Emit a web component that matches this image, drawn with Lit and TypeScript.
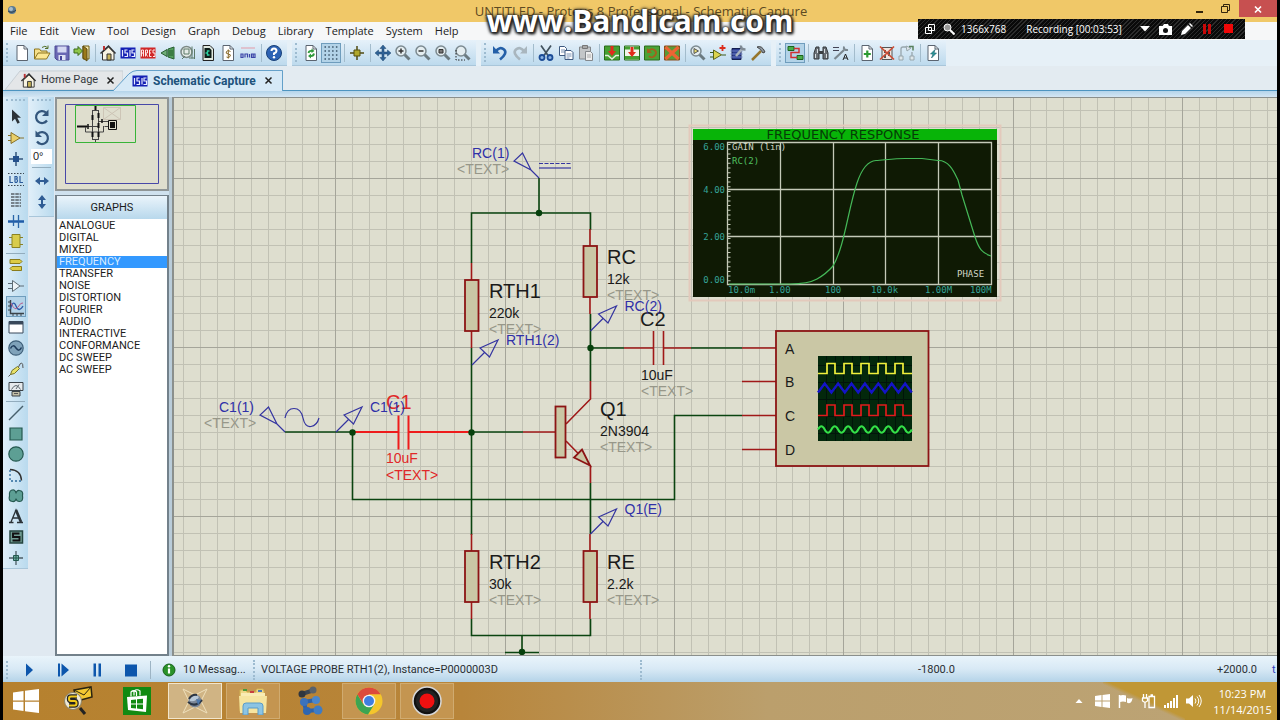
import { LitElement, html, svg, css } from "lit";
import { customElement, state } from "lit/decorators.js";
import { classMap } from "lit/directives/class-map.js";

/* ---------- icon library: every glyph is drawn in an 18 x 18 box ---------- */
const page = svg`<path d="M4 1.500h7l3.500 3.500v11.500H4z" fill="#fff" stroke="#5b6470"/><path d="M11 1.500V5h3.500" fill="none" stroke="#5b6470"/>`;
const lens = svg`<path d="M10.500 10.500l5 5" stroke="#6b7a80" stroke-width="3"/><circle cx="7" cy="7" r="5" fill="#e4edf0" stroke="#7c8a90" stroke-width="1.500"/>`;
const glyphs: Record<string, unknown> = {
  new: page,
  open: svg`<path d="M1.500 15V5h5l1.500 2h6v2" fill="#f6e08a" stroke="#8c7420"/><path d="M1.500 15L5 9h12l-3.500 6z" fill="#fbe793" stroke="#8c7420"/><path d="M9 3.500q3-2.500 5.500 0M15 1.500v3h-3" fill="none" stroke="#55702a"/>`,
  save: svg`<path d="M2 2h14v14H4l-2-2z" fill="#6a68b4" stroke="#4c4a94"/><path d="M4.500 2.500h9v6h-9z" fill="#d4d8f2"/><path d="M5.500 11h7v5h-7z" fill="#dfe2f4"/><path d="M7 12h2v4H7z" fill="#44449a"/>`,
  exit: svg`<path d="M10 2h6v13h-6z" fill="#f4e9b0" stroke="#6c5a10"/><path d="M10 2l4 3v12l-4-3z" fill="#9a7a1c" stroke="#5c4a10"/><path d="M1 5h4V2.500L9.500 7 5 11.500V9H1z" fill="#8ec64a" stroke="#3b6a1a"/>`,
  home: svg`<path d="M3.500 8.500L9.500 3l5.500 5.500V16h-11.500z" fill="#f7f3e2" stroke="#333"/><path d="M1.500 9.500L9.500 2l7 7.500" fill="none" stroke="#333" stroke-width="1.500"/><path d="M4 2h2v4H4z" fill="#b33"/><path d="M8 10h4v6H8z" fill="#c9b458" stroke="#333"/>`,
  isis: svg`<path d="M1.500 3.500h15v11h-15z" fill="#1420b4"/><path d="M3.500 6v6.500M8.500 6H6v3h2.500v3.500H5.500M11 6v6.500M15.500 6H13v3h2.500v3.500H12.500" fill="none" stroke="#e8ecff" stroke-width="1.200"/>`,
  ares: svg`<path d="M1.500 3.500h15v11h-15z" fill="#d02828"/><path d="M2.500 12.500V6h2v6.500M2.500 9h2M6.500 12.500V6h2v3h-2l2 3.500M12.500 6h-2v6.500h2M10.500 9h1.500M16 6h-2v3h2v3.500h-2" fill="none" stroke="#ffe6e6"/>`,
  three: svg`<path d="M9 5l6-2v12l-6-2z" fill="#53a05c" stroke="#2a6034"/><path d="M8 5.500v7L2 9z" fill="#6fae78" stroke="#2a6034"/><path d="M10 7h4M10 9h4M10 11h4" stroke="#245a2c"/>`,
  gerber: svg`<circle cx="7.500" cy="8" r="5.500" fill="#e6ece8" stroke="#7c8a86" stroke-width="1.500"/><path d="M5 5h5v5H5zM13 2.500v12M3 15l3-3M15.500 5v10M10 14h6" fill="none" stroke="#5c7a68"/>`,
  chip: svg`<path d="M4 1.500h7l3.500 3.500v11.500H4z" fill="#dfe8df" stroke="#222"/><path d="M5.500 4h5l2 2v8h-7z" fill="#0c1c18"/><path d="M10.500 7H8.500v4h2M6.500 9h2" fill="none" stroke="#2ad0a0" stroke-width="1.400"/>`,
  bom: svg`${page}<path d="M11.500 7.500Q9 5.500 7.500 7.500T9.300 10t1.700 2.500-3.500.500M9.300 5.500v9" fill="none" stroke="#8a6a2a"/>`,
  sim: svg`<path d="M2 4h14" stroke="#e0b4c0" stroke-width="1.500"/><path d="M2 13.500V10h2v3.500zM6 13.500V10h2.500v3.500M10.500 13.500V10M12.500 13.500V10h3.500v3.500zM14.200 10v3.500" fill="none" stroke="#3c46a8" stroke-width="1.200"/>`,
  help: svg`<circle cx="9" cy="9" r="7.500" fill="#2c62b4" stroke="#184078"/><path d="M6.500 7Q6.500 4.500 9 4.500T11.500 7Q11.500 8.500 9 9.500v1.500" fill="none" stroke="#fff" stroke-width="2"/><circle cx="9" cy="13.200" r="1.200" fill="#fff"/>`,
  redraw: svg`${page}<path d="M6.500 9Q7 6.500 10 7M12 9.500Q11.500 12.500 8 12" fill="none" stroke="#2f9a3c" stroke-width="1.800"/><path d="M9.500 4.500l3 2.500-3 2zM9 9.500L6 12l3 2.500z" fill="#2f9a3c"/>`,
  grid: svg`<path d="M2.500 3h13.500M2.500 7h13.500M2.500 11h13.500M2.500 15h13.500" stroke="#3b5468" stroke-width="1.500" stroke-dasharray="1.500 2.300"/>`,
  origin: svg`<path d="M9 2v14M2 9h14" stroke="#504a10" stroke-width="1.500"/><path d="M6 6h6v6H6z" fill="#b0a82c" stroke="#57500e"/>`,
  pan: svg`<path d="M9 1l3 3.500h-2V8h3.500V6L17 9l-3.500 3v-2H10v3.500h2L9 17l-3-3.500h2V10H4.500v2L1 9l3.500-3v2H8V4.500H6z" fill="#2f6296" stroke="#1f466e" stroke-width=".5"/>`,
  zin: svg`${lens}<path d="M4.500 7h5M7 4.500v5" stroke="#333" stroke-width="1.500"/>`,
  zout: svg`${lens}<path d="M4.500 7h5" stroke="#333" stroke-width="1.500"/>`,
  zall: svg`${lens}<path d="M5 5.500h4v3.500H5z" fill="#777" stroke="#333"/>`,
  zarea: svg`${lens}<path d="M2 6v10h9" fill="none" stroke="#222" stroke-dasharray="1.500 1.500"/>`,
  undo: svg`<path d="M4.500 7.500Q9 2 13 5.500T9 15.500" fill="none" stroke="#2560a8" stroke-width="2.600"/><path d="M2 2v7.500h7z" fill="#2560a8"/>`,
  redo: svg`<path d="M13.500 7.500Q9 2 5 5.500T9 15.500" fill="none" stroke="#a9b6be" stroke-width="2.600"/><path d="M16 2v7.500H9z" fill="#a9b6be"/>`,
  cut: svg`<path d="M4 1.500l7 10M14 1.500l-7 10" stroke="#42525e" stroke-width="1.700"/><circle cx="5" cy="13.500" r="2.500" fill="#8ab4e4" stroke="#1c4c96" stroke-width="1.800"/><circle cx="13" cy="13.500" r="2.500" fill="#8ab4e4" stroke="#1c4c96" stroke-width="1.800"/>`,
  copy: svg`<path d="M2.500 2.500h5l2 2v7h-7z" fill="#fff" stroke="#3f5a80"/><path d="M4 6h4M4 8h4" stroke="#7b93b4"/><path d="M8 6.500h6l2 2v7H8z" fill="#fff" stroke="#3f5a80"/><path d="M9.500 10h5M9.500 12h5M9.500 14h3" stroke="#7b93b4"/>`,
  paste: svg`<path d="M2.500 3h11v12h-11z" fill="#c3c6c8" stroke="#84888c"/><path d="M5.500 1.500h5v3h-5z" fill="#aaa" stroke="#777"/><path d="M8.500 7.500h5l2 2v7h-7z" fill="#eee" stroke="#84888c"/><path d="M10 11h4M10 13h4" stroke="#aaa"/>`,
  bcopy: svg`<path d="M1.500 2h15v14h-15z" fill="#45a032" stroke="#286a1c"/><path d="M2 11.500h3l4 3.500 4-3.500h3" fill="none" stroke="#e6f0dc" stroke-width="1.500"/><path d="M7.500 2h3v5H13l-4 5-4-5h2.500z" fill="#e02c1c"/>`,
  bmove: svg`<path d="M1.500 2h15v14h-15z" fill="#f2f4ec" stroke="#286a1c"/><path d="M2 2.500h5v3H2zM11 2.500h5v3h-5zM2 12h14v3.500H2z" fill="#45a032"/><path d="M7.500 3h3v5H13l-4 5-4-5h2.500z" fill="#e02c1c"/>`,
  brot: svg`<path d="M1.500 2h15v14h-15z" fill="#4ba336" stroke="#2c6c1e"/><path d="M5.500 7Q9 3.500 12 6.500T10 13Q7.500 14 6 12" fill="none" stroke="#a4601c" stroke-width="1.800"/><path d="M4 4v5h5z" fill="#a4601c"/>`,
  bdel: svg`<path d="M1.500 2h15v14h-15z" fill="#5a9a36" stroke="#8a4a1c"/><path d="M2.500 3l13 12M15.500 3l-13 12" stroke="#ec6434" stroke-width="3.200"/>`,
  pick: svg`${lens}<path d="M5 4.500v5L9.500 7z" fill="#e9dc6c" stroke="#555"/>`,
  make: svg`<path d="M4.500 6v9.500l8-4.700z" fill="#dcd44c" stroke="#5c6418"/><path d="M1 8.500h3.500M1 13h3.500M12.500 11H17" stroke="#3b5c1c"/><path d="M13.500 1v6M10.500 4h6" stroke="#dc2c1c" stroke-width="1.800"/>`,
  pack: svg`<path d="M3 4.500h9v11H3z" fill="#2c3e90" stroke="#141f50"/><path d="M1.500 7h12M1.500 10h12M1.500 13h12" stroke="#6c7cc4"/><path d="M7 12l6-7" stroke="#a9b3bc" stroke-width="2.500"/><path d="M12 1.500Q11.500 5.500 16.500 5.500" fill="none" stroke="#7f8a94" stroke-width="2.500"/>`,
  decomp: svg`<path d="M3 16l9-9" stroke="#96762c" stroke-width="2.500"/><path d="M8 3q5-2 8 5l-2 1Q12 5 8 3z" fill="#8c969e" stroke="#444"/>`,
  route: svg`<path d="M2 2.500h6v4H2zM11 11.500h6v4h-6z" fill="#4aae4a" stroke="#1c641c"/><path d="M8 4.500h5v4H5v5h6" fill="none" stroke="#d23030" stroke-width="1.500"/>`,
  binoc: svg`<path d="M2 15V9l2-6h3v12zM16 15V9l-2-6h-3v12z" fill="#6a7076" stroke="#34383c"/><path d="M7 7h4v3H7z" fill="#3a3e42"/><path d="M3.500 10v4M14.500 10v4M5.500 5v4M12.500 5v4" stroke="#d8dee2"/>`,
  prop: svg`<path d="M1 3.500h6M1 6.500h6" stroke="#445"/><path d="M2.500 15L12 6" stroke="#7c8890" stroke-width="2.200"/><path d="M12 2.500Q11 6.500 16 6" fill="none" stroke="#7c8890" stroke-width="2"/><path d="M11 16l2.500-6 2.500 6M12 14h3" fill="none" stroke="#222"/>`,
  addsheet: svg`${page}<path d="M9.300 6.500v7M5.800 10h7" stroke="#2c9a30" stroke-width="2.200"/>`,
  delsheet: svg`<path d="M4 3.500h10v12H4z" fill="#f0e6e0" stroke="#555"/><path d="M6 6h2v3H6zM10 8h2v4h-2zM6 11h2v3H6z" fill="#555"/><path d="M2 2.500l14 13M16 2.500l-14 13" stroke="#cc4c34" stroke-width="1.700"/>`,
  parent: svg`<path d="M3 12V5q0-2 2-2h4M14 12V8" fill="none" stroke="#98a6ac" stroke-width="1.300"/><path d="M1 12h4v4H1zM12 12h4v4h-4zM8 2l5 2-4 3z" fill="#dfe7ea" stroke="#98a6ac"/><path d="M11 2.500h4v4" fill="none" stroke="#58805c" stroke-width="1.500"/>`,
  erc: svg`${page}<path d="M11 5.500L6.500 10h2.500l-1.500 4 5-5H10z" fill="#2c9a9a" stroke="#1b5c6c" stroke-width=".6"/>`,
  arrow: svg`<path d="M5 1.500v12l3-2.700 2.500 5 2.300-1.200-2.500-4.800H14z" fill="#2d3338"/>`,
  comp: svg`<path d="M4 3.500v11l9-5.500z" fill="#e9cf6a" stroke="#86702a"/><path d="M1 6.500h3M1 11.500h3M13 9h4" stroke="#86702a"/>`,
  junction: svg`<path d="M9 2v14M2 9h14" stroke="#33557c" stroke-width="1.500"/><path d="M6 6h6v6H6z" fill="#24508c"/>`,
  label: svg`<path d="M1 3.500h16M1 15.500h16" stroke="#3b4650" stroke-dasharray="1.500 1.500"/><path d="M3 6v6.500h3M8 6v6.500M8 6.500h1.500q1.500 1.300 0 2.500 2 1.600 0 3.500H8M13 6v6.500h3" fill="none" stroke="#2c5c9c" stroke-width="1.200"/>`,
  script: svg`<path d="M4 3h10M4 6h10M4 9h10M4 12h10M4 15h10" stroke="#5a6268" stroke-width="1.300" stroke-dasharray="3.500 .8"/>`,
  bus: svg`<path d="M1 9.500h16" stroke="#1f5ca8" stroke-width="2.500"/><path d="M6.500 3v6M11.500 9v7M11.500 3v6M6.500 9v5" stroke="#2a66a8" stroke-width="1.300"/>`,
  sub: svg`<path d="M5 2.500h8v13H5z" fill="#d8cc4c" stroke="#8a8224"/><path d="M2 5.500h3M2 12.500h3M13 5.500h3M13 12.500h3" stroke="#8a8224"/>`,
  term: svg`<path d="M3 3.500h10l2 2-2 2H3z" fill="#dccb44" stroke="#8a7c1c"/><path d="M14.500 10.500H5l-2 2 2 2h9.500z" fill="#dccb44" stroke="#8a7c1c"/>`,
  pin: svg`<path d="M5.500 3.500v11L13 9z" fill="#eef4f8" stroke="#5c6a74"/><path d="M1 6.500h4M1 11.500h4M13 9h4" stroke="#5c6a74"/>`,
  graph: svg`<path d="M3.500 2v13.500H17" fill="none" stroke="#3b4248" stroke-width="1.400"/><path d="M3.500 11Q6 1 9 8t7 0" fill="none" stroke="#2c5ca8" stroke-width="1.300"/><path d="M4 5q4 9 7 4t5-4" fill="none" stroke="#b85c8c"/><path d="M1 4h2M1 8h2M1 12h2M6 16v2M10 16v2M14 16v2" stroke="#3b4248"/>`,
  popup: svg`<path d="M2 3.500h14v11.500H2z" fill="#fff" stroke="#39485a"/><path d="M2 3.500h14v3H2z" fill="#39485a"/>`,
  gen: svg`<circle cx="9" cy="9" r="7.200" fill="#7fa2ba" stroke="#3f607a" stroke-width="1.200"/><path d="M3.500 9.500Q6 4.500 9 9t5.500-.500" fill="none" stroke="#1f3c5c" stroke-width="1.500"/>`,
  vprobe: svg`<path d="M1.500 16.500l3-3" stroke="#555"/><path d="M3.500 14.500L5 10.500l5.500-4 2 2-5 5z" fill="#e8e26a" stroke="#76742a"/><path d="M11.500 7q1.500-4 3-4t1.500 5" fill="none" stroke="#555"/>`,
  instr: svg`<path d="M2 2.500h14v8H2z" fill="#e6eaec" stroke="#3a4248"/><path d="M4.500 9.500q4.500-8 9 0M9 9l3-4.500" fill="none" stroke="#5c666c"/><path d="M5 11.500h8v4.500H5z" fill="#c2bfa8" stroke="#3a4248"/><path d="M7 13.500h4" stroke="#555"/>`,
  line: svg`<path d="M2 16L16 2" stroke="#47606c" stroke-width="1.500"/>`,
  box: svg`<path d="M3 3h12v12H3z" fill="#5d9f94" stroke="#24584f" stroke-width="1.200"/>`,
  circle: svg`<circle cx="9" cy="9" r="7.200" fill="#5d9f94" stroke="#24584f" stroke-width="1.200"/>`,
  arc: svg`<path d="M3 3.500Q14 4 14.500 14.500" fill="none" stroke="#333" stroke-width="1.400"/><path d="M3 4v11h12" fill="none" stroke="#2c6a9c" stroke-dasharray="2 2" stroke-width="1.300"/>`,
  path: svg`<path d="M7 3Q9 4 9 6.500 9.500 3 12.500 3.500 16.500 4 15.500 8.500 16.500 14.500 12.500 14.500 9.500 14.500 9 11.500 8.500 15 5.500 14.500 1 14 2.500 9 1.500 2.500 7 3z" fill="#5d9f94" stroke="#24584f" stroke-width="1.200"/>`,
  textA: svg`<path d="M2 15.500h4.500M10 15.500h6M4 15L9 3l5 12M6 11h6" fill="none" stroke="#2b3338" stroke-width="1.300"/><path d="M9 3l5 12" stroke="#2b3338" stroke-width="2.700"/>`,
  symbol: svg`<path d="M3 3h12.500v12H3z" fill="#6f9c92" stroke="#24443f" stroke-width="1.500"/><path d="M12.500 5.500H6v3.500h6.500v3.500H5.500" fill="none" stroke="#111" stroke-width="1.900"/>`,
  marker: svg`<path d="M9 2v14M2 9h14" stroke="#4c5c64" stroke-width="1.300"/><path d="M6.500 6.500h5v5h-5z" fill="#6fb0a4" stroke="#24584f"/><path d="M9 6.500v5M6.500 9h5" stroke="#24584f"/>`,
  cw: svg`<path d="M14 12.500A6 6 0 1 1 13 4.500" fill="none" stroke="#33567c" stroke-width="2.200"/><path d="M15.500 1.500v6.500H9z" fill="#33567c"/>`,
  ccw: svg`<path d="M4 12.500A6 6 0 1 0 5 4.500" fill="none" stroke="#33567c" stroke-width="2.200"/><path d="M2.500 1.500v6.500H9z" fill="#33567c"/>`,
  flipx: svg`<path d="M2 9l5-4v3h4V5l5 4-5 4v-3H7v3z" fill="#2f5c94"/>`,
  flipy: svg`<path d="M9 2l4 5h-3v4h3l-4 5-4-5h3V7H5z" fill="#2f5c94"/>`,
  play: svg`<path d="M6 2.500v13L13 9z" fill="#0d56ac"/>`,
  step: svg`<path d="M4 2.500h2v13H4zM7.500 2.500v13L15 9z" fill="#0d56ac"/>`,
  pause: svg`<path d="M5.500 2.500h2.500v13H5.500zM10.500 2.500H13v13h-2.500z" fill="#0d56ac"/>`,
  stop: svg`<path d="M3 3.500h12v12H3z" fill="#0d56ac"/>`,
  info: svg`<circle cx="9" cy="9" r="6" fill="#2a9228" stroke="#17601a"/><path d="M9 7.500v5" stroke="#fff" stroke-width="2.200"/><circle cx="9" cy="5.200" r="1.200" fill="#fff"/>`,
};
const icon = (name: string, size = 18) =>
  html`<svg class="icon" width=${size} height=${size} viewBox="0 0 18 18" aria-hidden="true">${glyphs[name]}</svg>`;

const iconButton = css`
  button { font: inherit; color: inherit; border: 0; padding: 0; margin: 0; background: none; white-space: nowrap; }
  .tool { display: flex; align-items: center; justify-content: center; width: 20px; height: 20px; }
  .tool.on { background: #b3d3e8; box-shadow: inset 0 0 0 1px #6f9dbd; }
  .icon { display: block; flex: none; }
`;

/* ------------------------------ title bar ------------------------------ */
@customElement("title-bar")
class TitleBar extends LitElement {
  static styles = [iconButton, css`
    :host { display: grid; grid-template-columns: 94px 1fr 92px; height: 22px; background: #f0c868; color: #5d4a22; font: 13px/22px "Open Sans", sans-serif; }
    .logo { padding: 5px 0 0 4px; }
    .name { text-align: center; }
    .win { display: flex; height: 17px; }
    .win button { flex: 1; display: flex; align-items: center; justify-content: center; }
    .win .close { flex: 0 0 38px; background: #c75050; }
  `];
  render() {
    return html`
      <span class="logo"><svg class="icon" width="10" height="10" viewBox="0 0 10 10"><circle cx="5" cy="5" r="4" fill="#5b7b92"/><circle cx="4" cy="4" r="2" fill="#a8bccb"/><path d="M1 6q4 3 8-1" stroke="#2f3f50" fill="none"/></svg></span>
      <span class="name">UNTITLED - Proteus 8 Professional - Schematic Capture</span>
      <span class="win">
        <button aria-label="Minimize"><svg width="12" height="12"><path d="M3 9h7" stroke="#33240c" stroke-width="2"/></svg></button>
        <button aria-label="Restore"><svg width="12" height="12" fill="none" stroke="#33240c"><path d="M1.500 3.500h6v6h-6zM3.500 3V1.500h6v6H8"/></svg></button>
        <button class="close" aria-label="Close"><svg width="12" height="12"><path d="M3 3.500l6 6M9 3.500l-6 6" stroke="#fff" stroke-width="1.700"/></svg></button>
      </span>`;
  }
}

/* ------------------------------- menu bar ------------------------------ */
@customElement("menu-bar")
class MenuBar extends LitElement {
  static styles = [iconButton, css`
    :host { display: block; background: #f6f7f8; color: #222; font: 11px/18px "Open Sans", sans-serif; }
    nav { display: flex; gap: 12px; padding-left: 7px; height: 18px; }
  `];
  render() {
    const items = ["File", "Edit", "View", "Tool", "Design", "Graph", "Debug", "Library", "Template", "System", "Help"];
    return html`<nav>${items.map((m) => html`<button>${m}</button>`)}</nav>`;
  }
}

/* ------------------------------- toolbars ------------------------------ */
const SEP = "|";
@customElement("tool-strip")
class ToolStrip extends LitElement {
  static styles = [iconButton, css`
    :host { display: flex; gap: 5px; height: 26px; background: #e6f0f7; }
    .group { display: flex; align-items: center; padding: 0 3px 0 9px; background: linear-gradient(#e6f1fa, #bddaed); border-bottom: 1px solid #a9c6da; box-sizing: border-box; position: relative; }
    .group::before { content: ""; position: absolute; left: 3px; top: 3px; bottom: 3px; border-left: 2px dotted #9dbbd0; }
    .sep { width: 1px; height: 18px; margin: 0 2px 0 3px; background: #a3bccc; }
  `];
  groups: [string, string][][] = [
    [["new", "New project"], ["open", "Open project"], ["save", "Save project"], ["exit", "Close project"], [SEP, ""], ["home", "Home page"], ["isis", "Schematic capture"], ["ares", "PCB layout"], ["three", "3D visualizer"], ["gerber", "Gerber viewer"], ["chip", "Design explorer"], ["bom", "Bill of materials"], ["sim", "Source code"], [SEP, ""], ["help", "Help"]],
    [["redraw", "Redraw"], ["grid", "Toggle grid"], [SEP, ""], ["origin", "Origin"], [SEP, ""], ["pan", "Pan"], ["zin", "Zoom in"], ["zout", "Zoom out"], ["zall", "Zoom to sheet"], ["zarea", "Zoom to area"]],
    [["undo", "Undo"], ["redo", "Redo"], [SEP, ""], ["cut", "Cut"], ["copy", "Copy"], ["paste", "Paste"], [SEP, ""], ["bcopy", "Block copy"], ["bmove", "Block move"], ["brot", "Block rotate"], ["bdel", "Block delete"], [SEP, ""], ["pick", "Pick parts"], ["make", "Make device"], ["pack", "Packaging tool"], ["decomp", "Decompose"]],
    [["route", "Wire autorouter"], [SEP, ""], ["binoc", "Search and tag"], ["prop", "Property assignment"], [SEP, ""], ["addsheet", "New sheet"], ["delsheet", "Remove sheet"], ["parent", "Exit to parent"], [SEP, ""], ["erc", "Electrical rules check"]],
  ];
  render() {
    return this.groups.map((g) => html`<div class="group" role="toolbar">${g.map(([n, t]) => n === SEP
      ? html`<span class="sep"></span>`
      : html`<button class=${classMap({ tool: true, on: n === "grid" || n === "route" })} aria-label=${t} title=${t}>${icon(n)}</button>`)}</div>`);
  }
}

/* --------------------------------- tabs -------------------------------- */
@customElement("tab-strip")
class TabStrip extends LitElement {
  static styles = [iconButton, css`
    :host { display: flex; align-items: flex-end; height: 24px; background: #e3ebf1; border-bottom: 1px solid #4d94c0; color: #33383c; font: 11px/18px Roboto, sans-serif; }
    .tab { display: grid; height: 20px; }
    .tab > * { grid-area: 1 / 1; }
    .shape { width: 100%; height: 100%; }
    .body { display: flex; align-items: center; gap: 4px; }
    .home { width: 120px; }
    .home .body { padding-left: 17px; }
    .capture { width: 170px; margin-left: -10px; height: 21px; margin-bottom: -1px; font-size: 12px; font-weight: 700; color: #20527c; }
    .capture .body { padding-left: 18px; }
    .x { margin-left: 4px; }
  `];
  close() { return html`<button class="x" aria-label="Close tab"><svg class="icon" width="9" height="9"><path d="M1.500 1.500l6 6M7.500 1.500l-6 6" stroke="#222" stroke-width="1.500"/></svg></button>`; }
  render() {
    return html`
      <div class="tab home">
        <svg class="shape" viewBox="0 0 120 21" preserveAspectRatio="none"><path d="M2 21L17 1H120V21z" fill="#e4e6e8" stroke="#c6ced4"/></svg>
        <div class="body">${icon("home", 17)}<button>Home Page</button>${this.close()}</div>
      </div>
      <div class="tab capture">
        <svg class="shape" viewBox="0 0 170 22" preserveAspectRatio="none"><path d="M0 22L16 4Q20 .500 24 .500H169.500V22z" fill="#d6e9f7"/><path d="M0 22L16 4Q20 .500 24 .500H169.500V22" fill="none" stroke="#5f9ec8"/></svg>
        <div class="body">${icon("isis")}<button>Schematic Capture</button>${this.close()}</div>
      </div>`;
  }
}

/* ------------------------- drawing mode columns ------------------------ */
@customElement("mode-columns")
class ModeColumns extends LitElement {
  static styles = [iconButton, css`
    :host { display: flex; align-items: flex-start; width: 52px; background: #e0e9f1; }
    .col { display: flex; flex-direction: column; align-items: center; box-sizing: border-box; padding-top: 10px; border-bottom: 1px solid #a9c6da; background: linear-gradient(90deg, #e0eff9, #b9daee); position: relative; }
    .col::before { content: ""; position: absolute; top: 2px; left: 3px; right: 3px; border-top: 2px dotted #9dbbd0; }
    .modes { width: 25px; height: 472px; }
    .modes .tool { flex: 1; min-height: 0; }
    .sep { width: 19px; height: 1px; margin: 1px 0; background: #92acbd; }
    .turn { width: 25px; margin-left: 1px; height: 120px; gap: 1px; }
    .angle { width: 21px; height: 15px; border: 0; padding: 0 0 0 2px; box-sizing: border-box; background: #fff; color: #222; font: 11px/15px "Liberation Sans", sans-serif; }
    .turn .sep { margin: 2px 0; }
  `];
  render() {
    const b = (n: string) => html`<button class=${classMap({ tool: true, on: n === "graph" })} aria-label=${n}>${icon(n)}</button>`;
    return html`
      <div class="col modes" role="toolbar">
        ${["arrow", "comp", "junction", "label", "script", "bus", "sub"].map(b)}<span class="sep"></span>
        ${["term", "pin", "graph", "popup", "gen", "vprobe", "instr"].map(b)}<span class="sep"></span>
        ${["line", "box", "circle", "arc", "path", "textA", "symbol", "marker"].map(b)}
      </div>
      <div class="col turn" role="toolbar">
        ${b("cw")}${b("ccw")}
        <input class="angle" aria-label="Rotation angle" value="0°">
        <span class="sep"></span>
        ${b("flipx")}${b("flipy")}
      </div>`;
  }
}

/* ----------------------------- object panel ---------------------------- */
@customElement("object-panel")
class ObjectPanel extends LitElement {
  @state() selected = "FREQUENCY";
  static styles = [iconButton, css`
    :host { display: flex; flex-direction: column; width: 114px; gap: 4px; background: #cfe1ee; }
    .overview { height: 94px; box-sizing: border-box; border: 2px solid #8f9596; background: #dfdece; }
    .overview svg { display: block; width: 100%; height: 100%; }
    .picker { flex: 1; border: 2px solid #73818b; border-top-width: 1px; box-sizing: border-box; background: #fff; color: #1c1c1c; }
    h2 { margin: 0; height: 23px; text-align: center; font: 11px/23px Roboto, sans-serif; background: linear-gradient(#eaf4fb, #b8d8ec); }
    ul { list-style: none; margin: 0; padding: 1px 0; font: 11px/12px Roboto, sans-serif; }
    li button { display: block; width: 100%; height: 12px; padding-left: 2px; text-align: left; }
    li button.sel { background: #3399ff; color: #d9ecff; }
  `];
  render() {
    const kinds = ["ANALOGUE", "DIGITAL", "MIXED", "FREQUENCY", "TRANSFER", "NOISE", "DISTORTION", "FOURIER", "AUDIO", "INTERACTIVE", "CONFORMANCE", "DC SWEEP", "AC SWEEP"];
    return html`
      <div class="overview"><svg viewBox="0 0 110 90" fill="none">
        <path d="M8.500 5.500h93v79h-93z" stroke="#4848a8"/>
        <path d="M18.500 6.500h60v37h-60z" stroke="#38b438"/>
        <path d="M46.500 8.500h17v12h-17zM46.500 8.500l17 12M63.500 8.500l-17 12" stroke="#cdc5b6"/>
        <path d="M20 27.500h10" stroke="#111" stroke-width="2"/>
        <path d="M30 27.500h12M35.500 12v28M41.500 12v28M35 11.500h7M28.500 28v5h18v-6M42 22.500h9M47.500 27.500h4M35 40.500h7M38.500 41v2" stroke="#444"/>
        <path d="M38.500 7v4M35.500 16v5M41.500 14v5M41.500 24v5M35.500 33v5M41.500 33v5" stroke="#111" stroke-width="2"/>
        <path d="M45 20v4M31 25v5" stroke="#111" stroke-width="1.500"/>
        <path d="M51.500 21.500h8v9h-8z" stroke="#111"/><path d="M53 23h5v6h-5z" fill="#111"/>
      </svg></div>
      <div class="picker">
        <h2>GRAPHS</h2>
        <ul>${kinds.map((k) => html`<li><button class=${classMap({ sel: k === this.selected })} @click=${() => (this.selected = k)}>${k}</button></li>`)}</ul>
      </div>`;
  }
}

/* --------------------------- schematic canvas -------------------------- */
@customElement("schematic-sheet")
class SchematicSheet extends LitElement {
  static styles = css`
    :host { display: block; flex: 1; min-width: 0; background: #dedecf; border: 1px solid #8a8f8c; border-width: 1px 0 1px 2px; overflow: hidden; position: relative; }
    .sheet { position: absolute; inset: 0; width: 100%; height: 100%; font-family: "Liberation Sans", sans-serif; }
    .minor { stroke: #c1c1b4; }
    .major { stroke: #a5a59a; }
    .wire { fill: none; stroke: #0a4410; stroke-width: 1.600; }
    .pin { fill: none; stroke: #a01818; stroke-width: 1.600; }
    .part { fill: #cac7a5; stroke: #8c1414; stroke-width: 1.800; }
    .hot { fill: none; stroke: #ee1c1c; stroke-width: 2; }
    .dot { fill: #06400c; }
    .probe { fill: none; stroke: #3434a0; stroke-width: 1.200; }
    .ref { font-size: 20px; fill: #1a1a1a; }
    .val { font-size: 14px; fill: #1a1a1a; }
    .note { font-size: 14px; fill: #979789; }
    .net { font-size: 14px; fill: #3030a8; }
    .red { fill: #e02828; }
    .mono { font: 9px "DejaVu Sans Mono", monospace; }
    .head { font: 13px "DejaVu Sans", sans-serif; fill: #063c06; }
    .axis { fill: #35a398; }
    .lite { fill: #cfd6c4; }
    .green { fill: #50c060; }
    .trace { fill: none; stroke: #45b858; stroke-width: 1.200; }
    .frame { fill: none; stroke: #c4c9b8; stroke-width: 1.300; }
  `;
  label(x: number, y: number, ref: string, val: string) {
    return svg`<text class="ref" x=${x} y=${y}>${ref}</text><text class="val" x=${x} y=${y + 20}>${val}</text><text class="note" x=${x} y=${y + 36}>&lt;TEXT&gt;</text>`;
  }
  resistor(x: number, y: number) {
    return svg`<path class="pin" d=${`M${x} ${y - 17}v17M${x} ${y + 51}v17`}/><rect class="part" x=${x - 6.5} y=${y} width="13.500" height="51"/>`;
  }
  probe(x: number, y: number, name: string) {
    return svg`<path class="probe" d=${`M${x} ${y}l13-13M${x + 8} ${y - 17}L${x + 26} ${y - 25}L${x + 17.5} ${y - 8}z`}/><text class="net" x=${x + 34} y=${y - 20}>${name}</text>`;
  }
  source(x: number, y: number, name: string, nx: number) {
    return svg`<path class="probe" d=${`M${x} ${y}l-8-8L${x - 25} ${y - 17}L${x - 16.5} ${y - 25}L${x - 8} ${y - 8}`}/><text class="net" x=${nx} y=${y - 20}>${name}</text><text class="note" x=${nx - 15} y=${y - 4}>&lt;TEXT&gt;</text>`;
  }
  square(y0: number, y1: number) {
    let d = `M818 ${y0}`;
    for (let i = 0; i < 5; i++) d += `H${827 + i * 17}V${y1}h8V${y0}`;
    return d + "H912";
  }
  wave(y: number, a: number, smooth: boolean) {
    let d = `M818 ${y + (smooth ? 0 : a)}`;
    for (let i = 0; i < 7; i++) d += smooth ? `q3.350 ${-a * 2} 6.700 0t6.700 0` : `l6.700 ${-2 * a}l6.700 ${2 * a}`;
    return d;
  }
  grid() {
    const pitch = 16.93;
    const minor = [];
    const major = [];
    for (let k = 0; k < 240; k++) {
      const x = Math.round(183 + k * pitch) + 0.5;
      (k % 10 === 9 ? major : minor).push(`M${x} 0V4000`);
    }
    for (let k = 0; k < 160; k++) {
      const y = Math.round(110 + k * pitch) + 0.5;
      (k % 10 === 4 ? major : minor).push(`M0 ${y}H5000`);
    }
    return svg`<path class="minor" d=${minor.join("")}/><path class="major" d=${major.join("")}/>`;
  }
  response() {
    return svg`
      <rect x="689.500" y="125.500" width="311" height="175" fill="none" stroke="#e3c9bc" stroke-width="2"/>
      <rect x="693" y="129" width="304" height="168" fill="#0f1a04"/>
      <rect x="693" y="129" width="304" height="11" fill="#08b408"/>
      <text class="head" x="843" y="139" text-anchor="middle">FREQUENCY RESPONSE</text>
      <path class="frame" d="M727.500 142.500h264v142h-264zM780.500 142v142M833.500 142v142M885.500 142v142M938.500 142v142M727 189.500h264M727 236.500h264"/>
      <path d="M729 144v139" stroke="#c4c9b8" stroke-width="3" stroke-dasharray="1 3.700"/>
      <path class="trace" d="M729 284H790Q808 284 817 279T833 266C840 254 844 236 848 218S854 192 857 183C862 168 868 161 876 160.500S895 158.500 905 158.500H922L938 160.500C949 160 954 172 958 180L962 195 975 237C979 249 982 253 991 256"/>
      <g class="mono lite"><text x="732" y="150">GAIN (lin)</text><text x="957" y="277">PHASE</text></g>
      <text class="mono green" x="732" y="164">RC(2)</text>
      <g class="mono axis" text-anchor="end"><text x="725" y="150">6.00</text><text x="725" y="193">4.00</text><text x="725" y="240">2.00</text><text x="725" y="283">0.00</text></g>
      <g class="mono axis"><text x="728" y="293">10.0m</text><text x="769" y="293">1.00</text><text x="825" y="293">100</text><text x="871" y="293">10.0k</text><text x="925" y="293">1.00M</text><text x="970" y="293">100M</text></g>`;
  }
  scope() {
    return svg`
      <path class="pin" d="M742 348h34M742 381.500h34M742 415.500h34M742 449.500h34"/>
      <rect x="776" y="331" width="152.500" height="135" class="part"/>
      <g class="val"><text x="785" y="354">A</text><text x="785" y="387">B</text><text x="785" y="421">C</text><text x="785" y="455">D</text></g>
      <rect x="818" y="356" width="94" height="85" fill="#03280c"/>
      <path d="M826.500 356v85M835.500 356v85M843.500 356v85M852.500 356v85M860.500 356v85M869.500 356v85M878.500 356v85M886.500 356v85M895.500 356v85M903.500 356v85M818 365.500h94M818 382.500h94M818 399.500h94M818 416.500h94M818 433.500h94" stroke="#01140a" fill="none"/>
      <g fill="none" stroke-width="1.700">
        <path stroke="#f0f03c" d=${this.square(373.5, 363.5)}/>
        <path stroke="#1414c8" stroke-width="2.400" d=${this.wave(388, 4.5, false)}/>
        <path stroke="#e01c1c" d=${this.square(415.5, 405)}/>
        <path stroke="#34e048" stroke-width="2" d=${this.wave(429.5, 3.2, true)}/>
      </g>`;
  }
  render() {
    return html`<svg class="sheet" role="img" aria-label="Amplifier schematic"><g transform="translate(-174 -98)">
      ${this.grid()}
      <path class="wire" d="M539 178V213M471.500 263V213H590.500V230M471.500 348V535M590.500 314V381M590.500 483V534M285 432H352.500V499.500H674.500V415.500H742M471.500 432H523M590.500 348H624M691 348H742M471.500 619V635.500H590.500V619M522 635V652M505 652.500H539"/>
      <path class="pin" d="M590.500 381V399L566 424M566 441L590.500 466V483M523 432H556M624 348H653M664 348H691M653.500 331v34M663.500 331v34"/>
      <rect class="part" x="555.500" y="406.500" width="10" height="51"/>
      <path class="part" d="M590 465.500L574 457.500L582 449.500z"/>
      ${this.resistor(471.5, 280)}${this.resistor(590, 246)}${this.resistor(471.5, 551)}${this.resistor(590, 551)}
      <path class="hot" d="M352 432H398.500M408.500 432H471M398.500 415.500v34M408.500 415.500v34"/>
      <circle class="dot" cx="539" cy="213" r="3.200"/><circle class="dot" cx="590.500" cy="348" r="3.200"/><circle class="dot" cx="352.500" cy="432.500" r="3.200"/><circle class="dot" cx="471.500" cy="432.500" r="3.200"/><circle class="dot" cx="522" cy="652" r="3.200"/>
      ${this.label(489, 298, "RTH1", "220k")}${this.label(607, 264, "RC", "12k")}${this.label(489, 569, "RTH2", "30k")}${this.label(607, 569, "RE", "2.2k")}
      ${this.label(600, 416, "Q1", "2N3904")}
      <text class="ref" x="640" y="326">C2</text><text class="val" x="641" y="380">10uF</text><text class="note" x="641" y="396">&lt;TEXT&gt;</text>
      <text class="ref red" x="386" y="409">C1</text><text class="val red" x="386" y="463">10uF</text><text class="note red" x="386" y="480">&lt;TEXT&gt;</text>
      ${this.probe(472, 365, "RTH1(2)")}${this.probe(590.5, 331, "RC(2)")}${this.probe(590.5, 534, "Q1(E)")}${this.probe(336, 432, "C1(1)")}
      ${this.source(285, 432, "C1(1)", 219)}${this.source(539, 178, "RC(1)", 472)}
      <path class="probe" d="M285 418Q287 408.500 294 408.500T303 418T311 426.500T319 418"/>
      <path class="probe" d="M539 168h32"/><path class="probe" stroke-dasharray="4 1.500" d="M539 163.500h32"/>
      ${this.response()}${this.scope()}
    </g></svg>`;
  }
}

/* ------------------------------ status bar ----------------------------- */
@customElement("status-bar")
class StatusBar extends LitElement {
  static styles = [iconButton, css`
    :host { display: flex; align-items: center; height: 26px; box-sizing: border-box; padding-top: 2px; background: linear-gradient(#e9f4fb, #d8e9f5 50%, #b4d3e8); color: #2b2f33; font: 11px/20px Roboto, sans-serif; white-space: nowrap; overflow: hidden; }
    .run { display: flex; align-items: center; gap: 14px; padding-left: 11px; border-left: 2px dotted #9dbbd0; margin-left: 3px; height: 18px; flex: none; }
    .sep { width: 1px; height: 18px; background: #9db4c4; margin: 0 9px; }
    .msg { display: flex; align-items: center; gap: 5px; width: 84px; }
    .hint { flex: 1; padding-left: 6px; margin-left: 9px; height: 20px; border-left: 2px dotted #9dbbd0; }
    .coords { box-sizing: border-box; flex: 0 0 50%; padding: 0 0 0 276px; height: 20px; display: flex; border-left: 2px dotted #9dbbd0; }
    .cx { flex: 1; }
    .cy { margin-right: 15px; }
    .th { width: 5px; color: #2c3cc0; }
  `];
  render() {
    return html`
      <div class="run">
        ${["play", "step", "pause", "stop"].map((n) => html`<button class="tool" aria-label=${n}>${icon(n)}</button>`)}
      </div>
      <span class="sep"></span>
      <div class="msg">${icon("info")}<span>10 Messag...</span></div>
      <span class="hint">VOLTAGE PROBE RTH1(2), Instance=P0000003D</span>
      <span class="coords"><span class="cx">-1800.0</span><span class="cy">+2000.0</span><span class="th">t</span></span>`;
  }
}

/* -------------------------------- taskbar ------------------------------ */
@customElement("task-bar")
class TaskBar extends LitElement {
  static styles = [iconButton, css`
    :host { display: flex; justify-content: space-between; height: 38px; color: #fff; background:
      linear-gradient(#c09736, #c09736) right / 92px 100% no-repeat,
      linear-gradient(to top right, transparent 47%, #c09736 53%) right 92px top / 82px 100% no-repeat,
      linear-gradient(90deg, #b6812e, #b8853a 36%, #bb9f6c 60%, #bca476); }
    .apps { display: flex; gap: 4px; padding: 1px 0; }
    .apps button { width: 54px; height: 36px; display: flex; align-items: center; justify-content: center; box-sizing: border-box; }
    .apps .start { width: 45px; }
    .apps .open { background: #c49550; border: 1px solid #d0ab70; }
    .apps .active { background: #d0b484; border: 1px solid #f2e6cc; }
    .apps svg { display: block; }
    .tray { display: flex; align-items: center; gap: 5px; }
    .tray button { width: 18px; height: 20px; display: flex; align-items: center; justify-content: center; }
    .clock { width: 69px; padding-top: 1px; text-align: center; font: 11px/16px "Open Sans", sans-serif; }
  `];
  render() {
    return html`
      <div class="apps">
        <button class="start" aria-label="Start"><svg width="26" height="24" viewBox="0 0 26 24" fill="#fff"><path d="M0 3.500L10.500 2v9.500H0zM12 1.800L26 0v11.500H12zM0 12.700h10.500V22L0 20.500zM12 12.700h14V24l-14-1.800z"/></svg></button>
        <button aria-label="Mail search"><svg width="32" height="30" viewBox="0 0 32 30"><path d="M11 4l17-3 1 10-15 4z" fill="#f2c832" stroke="#2b2410" stroke-width="1.500"/><path d="M11 4l10 5 7-8" fill="none" stroke="#2b2410"/><path d="M17 22l5 6" stroke="#222" stroke-width="3"/><circle cx="10" cy="15" r="8.500" fill="#eee8d4" stroke="#8c8468"/><path d="M14 10.500H8q-2 0-2 2.200T8 15h3.500q2 0 2 2.200t-2 2.300H6" fill="none" stroke="#222" stroke-width="4.500"/><path d="M14 10.500H8q-2 0-2 2.200T8 15h3.500q2 0 2 2.200t-2 2.300H6" fill="none" stroke="#f0c818" stroke-width="2"/></svg></button>
        <button aria-label="Store"><svg width="28" height="28" viewBox="0 0 28 28"><path d="M0 0h28v28H0z" fill="#128a12"/><path d="M4 10l20-1.500-1 16.500-18-2z" fill="#fff"/><path d="M8 9.500V5q2.500-2.500 5.500 0v4M11 8.500V4q3-2.500 6 0v4.500" fill="none" stroke="#fff" stroke-width="1.200"/><path d="M8 13l5-.500v4H8zM14 12.300l6-.500v4.700h-6zM8 17.500h5v4l-5-.500zM14 17.500h6v4.800l-6-.700z" fill="#128a12"/></svg></button>
        <button class="active" aria-label="Proteus"><svg width="28" height="28" viewBox="0 0 28 28"><path d="M2 2l12 6L26 2l-6 12 6 12-12-6L2 26l6-12z" fill="none" stroke="#efe0bc"/><circle cx="14" cy="14" r="6.500" fill="#7c8898"/><path d="M8 11q6-5 10-1-3 5-9 4z" fill="#b8c8d8"/><path d="M7 15q7 6 14-2M8 12q3-5 8-4" fill="none" stroke="#2c3644" stroke-width="2"/><path d="M15 12l5 1-3 5z" fill="#4c78ac"/></svg></button>
        <button class="open" aria-label="File Explorer"><svg width="30" height="28" viewBox="0 0 30 28"><path d="M2 3h6l1 2h9V3l1-1h6l1 2v20H2z" fill="#efd887" stroke="#d0b050"/><path d="M3 6h24v3H3z" fill="#f9ecb4"/><path d="M5 2h4v2H5z" fill="#4a9a3c"/><path d="M12 4h4v2h-4z" fill="#c84040"/><path d="M20 3h4v2h-4z" fill="#4a7ab8"/><path d="M1 9h28l-1 17H2z" fill="#f6e5a0"/><path d="M5 28v-9q0-3 3-3h14q3 0 3 3v9h-5v-7H10v7z" fill="#8cc4e4" stroke="#5a9cc8"/></svg></button>
        <button aria-label="Virtual router"><svg width="28" height="30" viewBox="0 0 28 30"><path d="M5 8l12-4" stroke="#3b4450" stroke-width="4"/><circle cx="5" cy="8" r="3.500" fill="#30363e"/><circle cx="16" cy="4" r="3.500" fill="#59626c"/><path d="M19 14L7 16l2 9 12-1" fill="none" stroke="#2f62a8" stroke-width="4"/><circle cx="19" cy="14" r="4" fill="#4a86cc"/><circle cx="7" cy="16" r="4" fill="#3b72bc"/><circle cx="10" cy="25" r="4" fill="#2f66b0"/><circle cx="21" cy="24" r="4.500" fill="#3f7cc4"/></svg></button>
        <button class="open" aria-label="Chrome"><svg width="28" height="28" viewBox="0 0 28 28"><circle cx="14" cy="14" r="13.500" fill="#f4c62c"/><path d="M2.300 7.300A13.500 13.500 0 0 0 13 27.500L19.500 17 14 20 8.500 17.500z" fill="#3ca452"/><path d="M2.300 7.300A13.500 13.500 0 0 1 25.700 7.300H14L8.500 17z" fill="#dc4a3c"/><circle cx="14" cy="14" r="6.300" fill="#f4f4f4"/><circle cx="14" cy="14" r="5" fill="#3f7ee0"/></svg></button>
        <button class="open" aria-label="Bandicam"><svg width="30" height="30" viewBox="0 0 30 30"><circle cx="15" cy="15" r="14" fill="#111" stroke="#d8d8d8" stroke-width="1.500"/><circle cx="15" cy="15" r="11" fill="#222"/><circle cx="15" cy="15" r="7.500" fill="#f01010"/></svg></button>
      </div>
      <div class="tray">
        <button aria-label="Hidden icons"><svg width="8" height="6"><path d="M4 1l3.500 4h-7z" fill="#fff"/></svg></button>
        <button aria-label="Windows"><svg width="15" height="14" viewBox="0 0 15 14" fill="#fff"><path d="M0 2l6.500-1v5.500H0zM7.500 1L15 0v6.500H7.500zM0 7.500h6.500V13L0 12zM7.500 7.500H15V14l-7.500-1z"/></svg></button>
        <button aria-label="Action center"><svg width="15" height="15" viewBox="0 0 15 15"><path d="M1.500 1v13" stroke="#fff" stroke-width="1.500"/><path d="M2 1.500q3-1 6 0v6.500q-3-1-6 0zM9 4q3 1 5.500 0-.5 4-2.500 5-2 .500-3-.5z" fill="#fff"/></svg></button>
        <button aria-label="Battery"><svg width="15" height="16" viewBox="0 0 15 16" fill="none" stroke="#fff" stroke-width="1.300"><path d="M8 3.500h5.500v11H8zM9.500 2h2.500M2.500 1v4M5.500 1v4M1 5h6M1.500 5v3L4 9.500V15M6.500 5v3L4 9.500"/></svg></button>
        <button aria-label="Network"><svg width="15" height="13" fill="#fff"><path d="M0 10h2v3H0zM3 8h2v5H3zM6 6h2v7H6zM9 3h2v10H9zM12 0h2v13h-2z"/></svg></button>
        <button aria-label="Volume"><svg width="16" height="14" viewBox="0 0 16 14"><path d="M0 4.500h3L7 1v12L3 9.500H0z" fill="#fff"/><path d="M9 4.500q2 2.500 0 5M11 2.500q3.500 4.500 0 9M13 1q4.500 6 0 12" fill="none" stroke="#fff"/></svg></button>
        <div class="clock">10:23 PM<br>11/14/2015</div>
      </div>`;
  }
}

/* --------------------------- recorder overlays ------------------------- */
@customElement("recorder-overlay")
class RecorderOverlay extends LitElement {
  static styles = [iconButton, css`
    .mark { position: absolute; top: 0; left: 0; right: 0; text-align: center; font: 700 30px/42px "Open Sans", sans-serif; color: #fff; text-shadow: 0 0 3px #222, 1px 1px 3px #222, 2px 2px 3px #333, -1px 1px 3px #222, 0 0 4px #333; pointer-events: none; }
    .bar { position: absolute; top: 19px; right: 32px; width: 327px; height: 20px; box-sizing: border-box; padding: 0 10px 0 5px; display: flex; align-items: center; gap: 8px; color: #fff; font: 10px/20px "Open Sans", sans-serif; white-space: nowrap; background: repeating-linear-gradient(135deg, #0a0a0a 0 2px, #2c2c2c 2px 3px); }
    .lead { display: flex; align-items: center; gap: 6px; }
    .rec { margin: 0 auto 0 12px; }
    .bar button { width: 13px; height: 14px; display: flex; align-items: center; justify-content: center; flex: none; }
  `];
  render() {
    return html`
      <div class="mark">www.Bandicam.com</div>
      <div class="bar">
        <div class="lead">
          <button aria-label="Region"><svg width="10" height="10" fill="none" stroke="#fff"><path d="M3.500 .500h6v6h-6zM.500 3.500h6v6h-6z"/></svg></button>
          <button aria-label="Find"><svg width="12" height="12" fill="none" stroke="#fff"><circle cx="4.500" cy="4.500" r="3.500" fill="#999"/><path d="M7 7l4.500 4.500" stroke-width="2"/></svg></button>
          <span>1366x768</span>
        </div>
        <span class="rec">Recording [00:03:53]</span>
        <button aria-label="Options"><svg width="10" height="6"><path d="M0 0h10L5 5.500z" fill="#fff"/></svg></button>
        <button aria-label="Screenshot"><svg width="13" height="11" fill="#fff"><path d="M0 2h3.500L5 0h4l1 2h3v9H0z"/><circle cx="6.500" cy="6.500" r="2.500" fill="#111"/></svg></button>
        <button aria-label="Draw"><svg width="12" height="12" fill="#fff"><path d="M0 12l1-4 6-6 3 3-6 6zM8 1l1-1 3 3-1 1z"/></svg></button>
        <button aria-label="Pause"><svg width="9" height="10" fill="#c80808"><path d="M0 0h3v10H0zM5 0h3v10H5z"/></svg></button>
        <button aria-label="Stop"><svg width="10" height="10"><path d="M0 0h9v9H0z" fill="#f00808"/></svg></button>
      </div>`;
  }
}

/* ------------------------------ application ---------------------------- */
@customElement("app-root")
export class AppRoot extends LitElement {
  static styles = css`
    :host { display: block; background: #000; }
    .window { position: relative; display: flex; flex-direction: column; min-height: 100vh; margin: 0 3px; background: #c8dfef; }
    .ledge { height: 6px; background: linear-gradient(#b4d4ea, #d4e6f3); }
    .work { flex: 1; display: flex; }
    .gutter { width: 3px; background: #b9ccd9; }
  `;
  render() {
    return html`
      <div class="window">
        <title-bar></title-bar>
        <menu-bar></menu-bar>
        <tool-strip></tool-strip>
        <tab-strip></tab-strip>
        <div class="ledge"></div>
        <div class="work">
          <mode-columns></mode-columns>
          <object-panel></object-panel>
          <div class="gutter"></div>
          <schematic-sheet></schematic-sheet>
        </div>
        <status-bar></status-bar>
        <task-bar></task-bar>
        <recorder-overlay></recorder-overlay>
      </div>`;
  }
}
